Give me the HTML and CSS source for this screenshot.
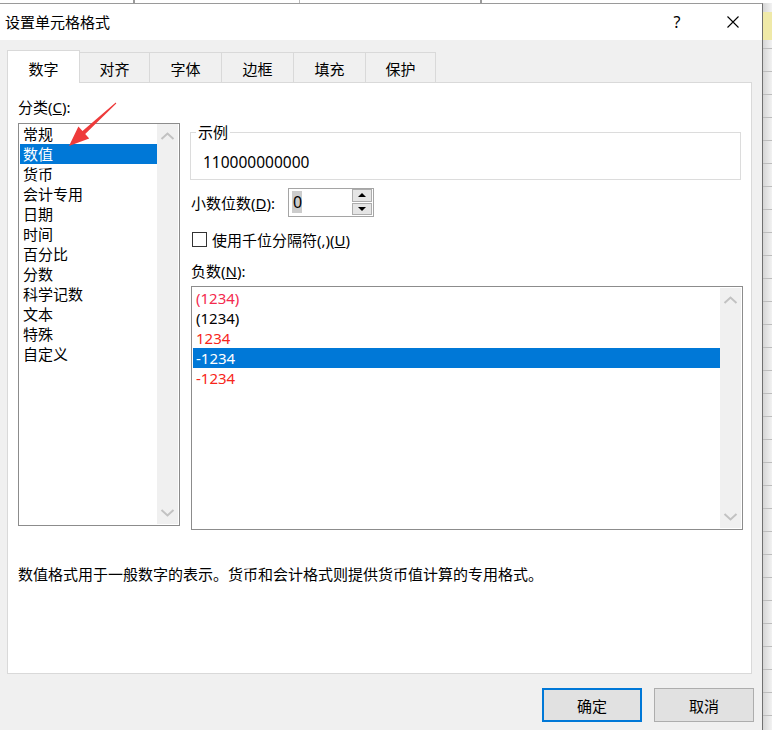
FILE: index.html
```html
<!DOCTYPE html>
<html lang="zh-CN">
<head>
    <meta charset="UTF-8">
    <meta name="viewport" content="width=device-width, initial-scale=1.0">
    <link rel="stylesheet" href="styles.css">
</head>
<body>
    <div class="sheet-top"></div>
    <div class="screen">
        <div class="dialog">
            <div class="titlebar">
                <span class="title">设置单元格格式</span>
                <span class="help">?</span>
                <svg class="close" width="12" height="12" viewBox="0 0 12 12">
                    <path d="M0.5 0.5 L11.5 11.5 M11.5 0.5 L0.5 11.5" stroke="#000" stroke-width="1.1" fill="none"/>
                </svg>
            </div>
            <div class="dialog-body">
                <div class="tabs">
                    <div class="tab active">数字</div>
                    <div class="tab narrow">对齐</div>
                    <div class="tab">字体</div>
                    <div class="tab">边框</div>
                    <div class="tab">填充</div>
                    <div class="tab narrow">保护</div>
                </div>
                <div class="panel">
                    <div class="columns">
                        <div class="col-left">
                            <div class="label">分类(<u>C</u>):</div>
                            <div class="listbox category">
                                <div class="items">
                                    <div class="item">常规</div>
                                    <div class="item selected">数值</div>
                                    <div class="item">货币</div>
                                    <div class="item">会计专用</div>
                                    <div class="item">日期</div>
                                    <div class="item">时间</div>
                                    <div class="item">百分比</div>
                                    <div class="item">分数</div>
                                    <div class="item">科学记数</div>
                                    <div class="item">文本</div>
                                    <div class="item">特殊</div>
                                    <div class="item">自定义</div>
                                </div>
                                <div class="scrollbar">
                                    <svg width="15" height="8" viewBox="0 0 15 8"><polyline points="1.5,7 7.5,1.5 13.5,7" stroke="#c2c2c2" stroke-width="2" fill="none"/></svg>
                                    <svg width="15" height="8" viewBox="0 0 15 8"><polyline points="1.5,1 7.5,6.5 13.5,1" stroke="#c2c2c2" stroke-width="2" fill="none"/></svg>
                                </div>
                            </div>
                        </div>
                        <div class="col-right">
                            <fieldset class="sample">
                                <legend>示例</legend>
                                <div class="sample-value">110000000000</div>
                            </fieldset>
                            <div class="decimal-row">
                                <span class="decimal-label">小数位数(<u>D</u>):</span>
                                <div class="spinner">
                                    <span class="spin-value">0</span>
                                    <div class="spin-buttons">
                                        <span class="spin-btn"><span class="tri-up"></span></span>
                                        <span class="spin-btn"><span class="tri-down"></span></span>
                                    </div>
                                </div>
                            </div>
                            <div class="check-row">
                                <span class="check"></span>
                                <span>使用千位分隔符(,)(<u>U</u>)</span>
                            </div>
                            <div class="label neg-label">负数(<u>N</u>):</div>
                            <div class="listbox negative">
                                <div class="items">
                                    <div class="item neg-pink">(1234)</div>
                                    <div class="item">(1234)</div>
                                    <div class="item neg-red">1234</div>
                                    <div class="item selected">-1234</div>
                                    <div class="item neg-red">-1234</div>
                                </div>
                                <div class="scrollbar">
                                    <svg width="15" height="8" viewBox="0 0 15 8"><polyline points="1.5,7 7.5,1.5 13.5,7" stroke="#c2c2c2" stroke-width="2" fill="none"/></svg>
                                    <svg width="15" height="8" viewBox="0 0 15 8"><polyline points="1.5,1 7.5,6.5 13.5,1" stroke="#c2c2c2" stroke-width="2" fill="none"/></svg>
                                </div>
                            </div>
                        </div>
                    </div>
                    <p class="desc">数值格式用于一般数字的表示。货币和会计格式则提供货币值计算的专用格式。</p>
                    <svg class="arrow" width="90" height="60" viewBox="37 97 90 60">
                        <polygon points="115.7,102.6 116.3,103.4 85.2,134 89.2,138.4 69,146 78.4,126.6 82.5,131" fill="#ee3b3b"/>
                    </svg>
                </div>
                <div class="buttons">
                    <button class="btn primary">确定</button>
                    <button class="btn">取消</button>
                </div>
            </div>
        </div>
        <div class="sheet-side">
            <div class="sheet-note"></div>
        </div>
    </div>
</body>
</html>
```

FILE: styles.css
```css
* {
    box-sizing: border-box;
}
body {
    margin: 0;
    width: 772px;
    height: 730px;
    overflow: hidden;
    font-family: "Noto Sans", "Noto Sans CJK SC", sans-serif;
    font-size: 15px;
    line-height: 20px;
    color: #000;
    background: #fff;
}
.sheet-top {
    height: 3px;
    background: linear-gradient(to right, #fff 133px, #9a9a9a 133px, #9a9a9a 135px, #fff 135px, #fff 299px, #bbb 299px, #bbb 300px, #fff 300px, #fff 480px, #9a9a9a 480px, #9a9a9a 482px, #fff 482px);
}
.screen {
    display: flex;
    height: 727px;
}
.dialog {
    width: 763px;
    height: 727px;
    border-top: 1px solid #9a9a9a;
    border-right: 1px solid #707070;
    background: #f0f0f0;
    display: flex;
    flex-direction: column;
}
.titlebar {
    height: 36px;
    background: #fff;
    display: flex;
    align-items: center;
    padding-left: 5px;
}
.title {
    flex: 1;
}
.help {
    width: 10px;
    text-align: center;
    margin-right: 45px;
    font-size: 16px;
}
.close {
    margin-right: 23px;
}
.dialog-body {
    flex: 1;
}
.tabs {
    display: flex;
    align-items: flex-end;
    height: 42px;
    padding-left: 7px;
}
.tab {
    width: 73px;
    height: 30px;
    margin-left: -1px;
    border: 1px solid #d9d9d9;
    border-bottom: none;
    background: #f0f0f0;
    text-align: center;
    line-height: 32px;
}
.tab.narrow {
    width: 71px;
}
.tab.active {
    margin-left: 0;
    height: 33px;
    margin-bottom: -1px;
    background: #fff;
    position: relative;
    z-index: 1;
    line-height: 36px;
}
.panel {
    position: relative;
    margin-left: 7px;
    width: 745px;
    height: 592px;
    border: 1px solid #d9d9d9;
    background: #fff;
}
.columns {
    display: flex;
    gap: 11px;
    padding: 14px 0 0 10px;
}
.col-left {
    width: 162px;
}
.col-left .label {
    margin-bottom: 6px;
}
.listbox {
    display: flex;
    border: 1px solid #8c8c8c;
    padding: 0 1px 1px 1px;
}
.listbox.category {
    height: 403px;
}
.listbox.negative {
    height: 244px;
    padding-top: 1px;
}
.items {
    flex: 1;
}
.item {
    height: 20px;
    padding-left: 3px;
    white-space: nowrap;
}
.item.selected {
    background: #0078d7;
    color: #fff;
}
.neg-pink {
    color: #f42a4e;
}
.neg-red {
    color: #f7261b;
}
.scrollbar {
    width: 21px;
    background: #f0f0f0;
    display: flex;
    flex-direction: column;
    justify-content: space-between;
    align-items: center;
    padding: 8px 0 7px;
}
.col-right {
    width: 552px;
    padding-top: 25px;
}
.sample {
    margin: 0 0 0 -1px;
    padding: 0;
    min-width: 0;
    width: 551px;
    height: 58px;
    border: 1px solid #dcdcdc;
}
.sample legend {
    margin-left: 5px;
    padding: 0 2px;
    line-height: 20px;
}
.sample-value {
    margin-top: 10px;
    padding-left: 12px;
    font-size: 15.5px;
}
.decimal-row {
    display: flex;
    align-items: center;
    margin-top: 8px;
}
.decimal-label {
    width: 97px;
}
.spinner {
    display: flex;
    justify-content: space-between;
    width: 86px;
    height: 29px;
    border: 1px solid #a5a5a5;
    padding: 2px 1px 0 3px;
}
.spin-value {
    width: 10px;
    height: 22px;
    line-height: 22px;
    background: #cccccc;
    font-size: 16px;
    padding-left: 1px;
}
.spin-buttons {
    display: flex;
    flex-direction: column;
    gap: 1px;
    margin-top: -2px;
    padding-bottom: 1px;
}
.spin-btn {
    width: 20px;
    height: 13px;
    border: 1px solid #adadad;
    background: #e5e5e5;
    display: flex;
    align-items: center;
    justify-content: center;
}
.tri-up {
    border-left: 4px solid transparent;
    border-right: 4px solid transparent;
    border-bottom: 4px solid #000;
}
.tri-down {
    border-left: 4px solid transparent;
    border-right: 4px solid transparent;
    border-top: 4px solid #000;
}
.check-row {
    display: flex;
    align-items: center;
    gap: 5px;
    height: 15px;
    margin-top: 15px;
    padding-left: 1px;
}
.check {
    width: 15px;
    height: 15px;
    border: 1px solid #333;
    background: #fff;
}
.neg-label {
    margin-top: 14px;
    margin-bottom: 5px;
}
.desc {
    margin: 34px 0 0;
    padding-left: 10px;
}
.arrow {
    position: absolute;
    left: 29px;
    top: 14px;
}
.buttons {
    display: flex;
    justify-content: flex-end;
    gap: 12px;
    padding-right: 8px;
    margin-top: 14px;
}
.btn {
    width: 100px;
    height: 34px;
    border: 1px solid #adadad;
    background: #e1e1e1;
    font-family: "Noto Sans CJK SC", sans-serif;
    font-size: 15px;
    color: #000;
    padding: 0;
}
.btn.primary {
    border: 2px solid #0078d7;
}
.sheet-side {
    flex: 1;
    background: repeating-linear-gradient(to bottom, transparent 0, transparent 22px, #bdbdbd 22px, #bdbdbd 23px), linear-gradient(to right, #d6d6d6, #f2f2f2);
}
.sheet-note {
    margin-top: 9px;
    height: 28px;
    background: #efe9a8;
}
```
